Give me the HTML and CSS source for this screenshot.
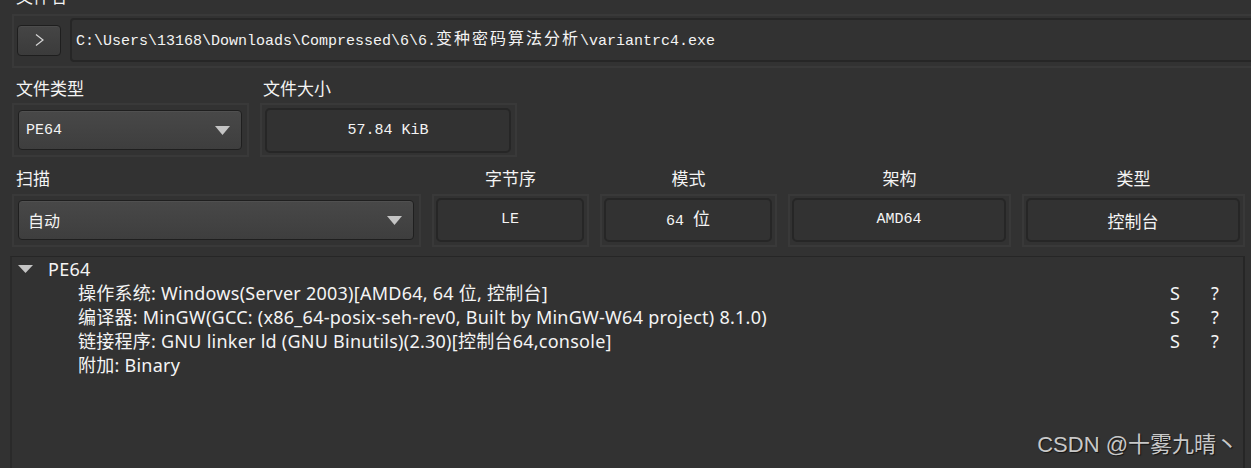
FILE: index.html
```html
<!DOCTYPE html>
<html>
<head>
<meta charset="utf-8">
<link rel="stylesheet" href="styles.css">
</head>
<body>
<div class="page">
  <div class="label name-label">文件名</div>
  <div class="frame path-frame">
    <button class="btn-go"><svg width="9" height="12" viewBox="0 0 9 12"><polyline points="1,0.5 8,6 1,11.5" fill="none" stroke="#d6d6d6" stroke-width="1.2"/></svg></button>
    <div class="path-box"><span class="path-text">C:\Users\13168\Downloads\Compressed\6\6.<span class="cjk">变种密码算法分析</span>\variantrc4.exe</span></div>
  </div>

  <div class="row2">
    <div class="col col-type">
      <div class="label">文件类型</div>
      <div class="frame combo-frame">
        <div class="combo"><span class="mono">PE64</span><svg class="arrow" width="15" height="9" viewBox="0 0 15 9"><polygon points="0,0 15,0 7.5,9" fill="#c4c4c4"/></svg></div>
      </div>
    </div>
    <div class="col col-size">
      <div class="label size-label">文件大小</div>
      <div class="frame value-frame size-frame">
        <div class="value"><span>57.84 KiB</span></div>
      </div>
    </div>
  </div>

  <div class="row3">
    <div class="label">扫描</div>
    <div class="label center">字节序</div>
    <div class="label center">模式</div>
    <div class="label center">架构</div>
    <div class="label center">类型</div>

    <div class="frame combo-frame scan-frame">
      <div class="combo"><span class="cjk-plain">自动</span><svg class="arrow" width="15" height="9" viewBox="0 0 15 9"><polygon points="0,0 15,0 7.5,9" fill="#c4c4c4"/></svg></div>
    </div>
    <div class="frame value-frame small-frame"><div class="value"><span>LE</span></div></div>
    <div class="frame value-frame small-frame"><div class="value"><span>64&nbsp;<span class="cjk-v">位</span></span></div></div>
    <div class="frame value-frame small-frame"><div class="value"><span>AMD64</span></div></div>
    <div class="frame value-frame small-frame"><div class="value"><span class="cjk-v">控制台</span></div></div>
  </div>

  <div class="tree">
    <div class="tree-root">
      <svg class="tri" width="15" height="8" viewBox="0 0 15 8"><polygon points="0,0 15,0 7.5,8" fill="#c4c4c4"/></svg>
      <span>PE64</span>
    </div>
    <div class="tree-row"><span class="t">操作系统: Windows(Server 2003)[AMD64, 64 位, 控制台]</span><span class="s">S</span><span class="q">?</span></div>
    <div class="tree-row"><span class="t">编译器: MinGW(GCC: (x86_64-posix-seh-rev0, Built by MinGW-W64 project) 8.1.0)</span><span class="s">S</span><span class="q">?</span></div>
    <div class="tree-row"><span class="t">链接程序: GNU linker ld (GNU Binutils)(2.30)[控制台64,console]</span><span class="s">S</span><span class="q">?</span></div>
    <div class="tree-row"><span class="t">附加: Binary</span></div>
  </div>
</div>
<div class="watermark">CSDN @十雾九晴丶</div>
</body>
</html>
```

FILE: styles.css
```css
* { box-sizing: border-box; }

html, body {
  margin: 0;
  padding: 0;
}

body {
  background: #323232;
  color: #f2f2f2;
  width: 1251px;
  height: 468px;
  overflow: hidden;
  position: relative;
  font-family: "Noto Sans", "Noto Sans CJK SC", sans-serif;
}

.page {
  margin-top: -15px;
  padding-left: 12px;
}

.label {
  font-family: "Noto Sans CJK SC", sans-serif;
  font-size: 17px;
  line-height: 22px;
  height: 22px;
  color: #f4f4f4;
  white-space: nowrap;
  padding-left: 4px;
}

.label.center {
  text-align: center;
  padding-left: 0;
}

.size-label { padding-left: 3px; }

.name-label { margin-bottom: 7px; }

.frame {
  border: 2px solid #393939;
}

.path-frame {
  width: 1250px;
  height: 54px;
  padding: 2px 0 4px 3px;
  display: flex;
  align-items: center;
  gap: 9px;
}

.btn-go {
  width: 44px;
  height: 31px;
  padding: 0;
  border: 1px solid #1e1e1e;
  border-radius: 4px;
  background: linear-gradient(#454545, #3b3b3b);
  box-shadow: inset 0 1px 0 #4c4c4c;
  display: flex;
  align-items: center;
  justify-content: center;
}

.path-box {
  flex: 1;
  height: 44px;
  border: 2px solid #262626;
  border-radius: 4px;
  background: #323232;
  padding-left: 4px;
  padding-top: 1px;
  display: flex;
  align-items: center;
  font-family: "Liberation Mono", "Noto Sans CJK SC", monospace;
  font-size: 15px;
  color: #f4f4f4;
  white-space: nowrap;
}

.path-text { line-height: 20px; }

.path-box .cjk {
  font-family: "Noto Sans CJK SC", sans-serif;
  font-size: 16px;
  letter-spacing: 2px;
  line-height: 1;
  vertical-align: 0.5px;
}

.row2 {
  display: flex;
  gap: 11px;
  margin-top: 9px;
}

.row2 .label { margin-bottom: 4px; }

.col-type .frame { width: 237px; }
.col-size .frame { width: 257px; }

.combo-frame {
  height: 54px;
  padding: 5px 5px 5px 4px;
}

.combo {
  height: 40px;
  border: 1px solid #1f1f1f;
  border-radius: 4px;
  background: linear-gradient(#484848, #3e3e3e);
  box-shadow: inset 0 1px 0 #505050;
  display: flex;
  align-items: center;
  justify-content: space-between;
  padding: 0 11px 0 7px;
}

.mono {
  font-family: "Liberation Mono", "Noto Sans CJK SC", monospace;
  font-size: 15px;
  color: #f4f4f4;
}

.cjk-plain {
  font-family: "Noto Sans CJK SC", sans-serif;
  font-size: 16px;
  padding-left: 2px;
  color: #f4f4f4;
}

.value-frame {
  display: flex;
}

.size-frame {
  height: 54px;
  padding: 3px 4px 2px 3px;
}

.value {
  flex: 1;
  border: 2px solid #262626;
  border-radius: 5px;
  background: #323232;
  display: flex;
  align-items: center;
  justify-content: center;
  font-family: "Liberation Mono", "Noto Sans CJK SC", monospace;
  font-size: 15px;
  line-height: 20px;
  color: #f4f4f4;
  white-space: nowrap;
}

.cjk-v {
  font-family: "Noto Sans CJK SC", sans-serif;
  font-size: 17px;
  line-height: 1;
}

.row3 {
  display: grid;
  grid-template-columns: 409px 157px 177px 223px 223px;
  column-gap: 11px;
  margin-top: 10px;
}

.row3 .label { margin-bottom: 5px; }

.scan-frame {
  height: 53px;
  padding: 4px 5px 5px 4px;
}

.small-frame {
  height: 53px;
  padding: 2px 3px 3px 2px;
}

.tree {
  margin-top: 9px;
  margin-left: -2px;
  width: 1235px;
  height: 230px;
  border-top: 1px solid #262626;
  border-left: 2px solid #2a2a2a;
  border-right: 2px solid #262626;
  font-size: 18px;
  letter-spacing: 0.25px;
  line-height: 24px;
  color: #f4f4f4;
}

.tree-root {
  display: flex;
  align-items: center;
  height: 24px;
  padding-left: 6px;
}

.tree-root .tri { margin-right: 15px; }

.tree-row {
  display: flex;
  height: 24px;
  padding-left: 66px;
  white-space: nowrap;
}

.tree-row .t { flex: 1; }
.tree-row .s { width: 41px; }
.tree-row .q { width: 32px; }

.watermark {
  position: absolute;
  right: 13px;
  top: 431px;
  font-family: "Liberation Sans", "Noto Sans CJK SC", sans-serif;
  font-size: 22px;
  line-height: 28px;
  color: #c8c8c8;
  text-shadow: 1px 1px 1px rgba(0, 0, 0, 0.6);
  white-space: nowrap;
}
```
